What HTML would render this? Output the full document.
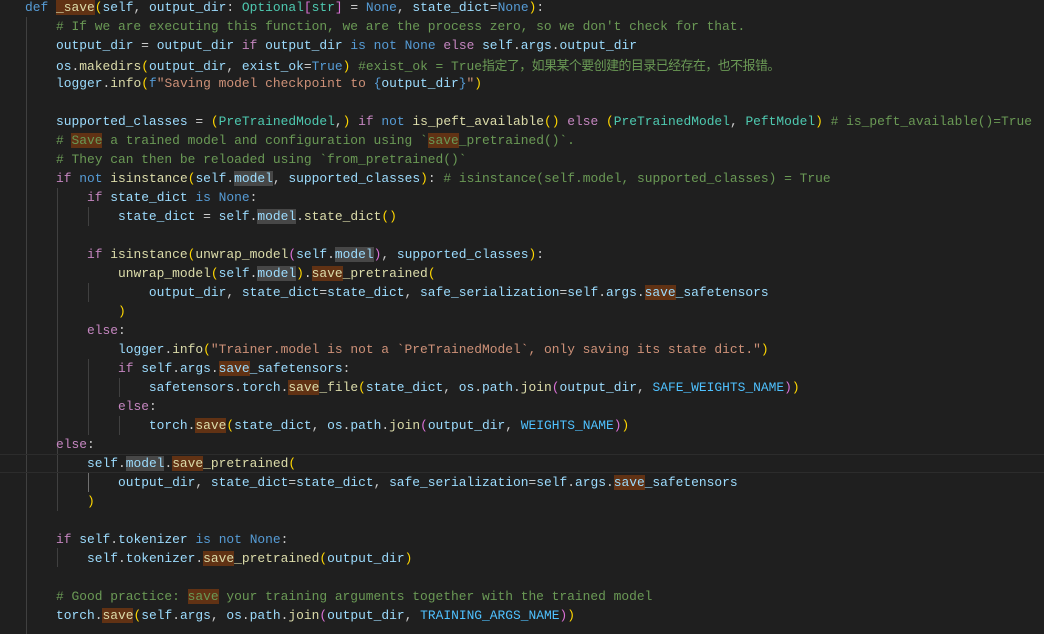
<!DOCTYPE html>
<html><head><meta charset="utf-8"><style>
html,body{margin:0;padding:0;background:#1f1f1f;width:1044px;height:634px;overflow:hidden}
#ed{position:absolute;left:0;top:-2px;width:1044px;font-family:"Liberation Mono","Noto Sans CJK SC",monospace;font-size:12.92px;color:#cccccc}
.l{height:19px;line-height:19px;white-space:pre;padding-left:25px;position:relative}
.cur{box-shadow:inset 0 1px 0 #2c2c2c,inset 0 -1px 0 #2c2c2c}
.k{color:#569cd6}.c{color:#c586c0}.f{color:#dcdcaa}.v{color:#9cdcfe}.m{color:#6a9955}.s{color:#ce9178}.t{color:#4ec9b0}.n{color:#4fc1ff}
.b1{color:#ffd700}.b2{color:#da70d6}.b3{color:#179fff}
.hm{background:#474747}.hs{background:#613214}
.g{position:absolute;width:1px;background:#404040}
.cn{font-family:"Noto Sans CJK SC",sans-serif;letter-spacing:-0.5px}
</style></head><body>
<div class="g" style="left:26px;top:17px;height:617px"></div>
<div class="g" style="left:57px;top:188px;height:266px"></div>
<div class="g" style="left:88px;top:283px;height:19px"></div>
<div class="g" style="left:88px;top:359px;height:76px"></div>
<div class="g" style="left:119px;top:378px;height:19px"></div>
<div class="g" style="left:119px;top:416px;height:19px"></div>
<div class="g" style="left:88px;top:207px;height:19px"></div>
<div class="g" style="left:57px;top:454px;height:57px"></div>
<div class="g" style="left:88px;top:473px;height:19px;background:#707070"></div>
<div class="g" style="left:57px;top:548px;height:19px"></div>
<div id="ed">
<div class="l"><span class="k">def</span> <span class="f hs">_save</span><span class="b1">(</span><span class="v">self</span>, <span class="v">output_dir</span>: <span class="t">Optional</span><span class="b2">[</span><span class="t">str</span><span class="b2">]</span> = <span class="k">None</span>, <span class="v">state_dict</span>=<span class="k">None</span><span class="b1">)</span>:</div>
<div class="l">    <span class="m"># If we are executing this function, we are the process zero, so we don't check for that.</span></div>
<div class="l">    <span class="v">output_dir</span> = <span class="v">output_dir</span> <span class="c">if</span> <span class="v">output_dir</span> <span class="k">is</span> <span class="k">not</span> <span class="k">None</span> <span class="c">else</span> <span class="v">self</span>.<span class="v">args</span>.<span class="v">output_dir</span></div>
<div class="l">    <span class="v">os</span>.<span class="f">makedirs</span><span class="b1">(</span><span class="v">output_dir</span>, <span class="v">exist_ok</span>=<span class="k">True</span><span class="b1">)</span> <span class="m">#exist_ok = True<span class="cn">指定了，如果某个要创建的目录已经存在，也不报错。</span></span></div>
<div class="l">    <span class="v">logger</span>.<span class="f">info</span><span class="b1">(</span><span class="k">f</span><span class="s">"Saving model checkpoint to </span><span class="k">{</span><span class="v">output_dir</span><span class="k">}</span><span class="s">"</span><span class="b1">)</span></div>
<div class="l"> </div>
<div class="l">    <span class="v">supported_classes</span> = <span class="b1">(</span><span class="t">PreTrainedModel</span>,<span class="b1">)</span> <span class="c">if</span> <span class="k">not</span> <span class="f">is_peft_available</span><span class="b1">()</span> <span class="c">else</span> <span class="b1">(</span><span class="t">PreTrainedModel</span>, <span class="t">PeftModel</span><span class="b1">)</span> <span class="m"># is_peft_available()=True</span></div>
<div class="l">    <span class="m"># <span class="hs">Save</span> a trained model and configuration using `<span class="hs">save</span>_pretrained()`.</span></div>
<div class="l">    <span class="m"># They can then be reloaded using `from_pretrained()`</span></div>
<div class="l">    <span class="c">if</span> <span class="k">not</span> <span class="f">isinstance</span><span class="b1">(</span><span class="v">self</span>.<span class="v hm">model</span>, <span class="v">supported_classes</span><span class="b1">)</span>: <span class="m"># isinstance(self.model, supported_classes) = True</span></div>
<div class="l">        <span class="c">if</span> <span class="v">state_dict</span> <span class="k">is</span> <span class="k">None</span>:</div>
<div class="l">            <span class="v">state_dict</span> = <span class="v">self</span>.<span class="v hm">model</span>.<span class="f">state_dict</span><span class="b1">()</span></div>
<div class="l"> </div>
<div class="l">        <span class="c">if</span> <span class="f">isinstance</span><span class="b1">(</span><span class="f">unwrap_model</span><span class="b2">(</span><span class="v">self</span>.<span class="v hm">model</span><span class="b2">)</span>, <span class="v">supported_classes</span><span class="b1">)</span>:</div>
<div class="l">            <span class="f">unwrap_model</span><span class="b1">(</span><span class="v">self</span>.<span class="v hm">model</span><span class="b1">)</span>.<span class="f"><span class="hs">save</span>_pretrained</span><span class="b1">(</span></div>
<div class="l">                <span class="v">output_dir</span>, <span class="v">state_dict</span>=<span class="v">state_dict</span>, <span class="v">safe_serialization</span>=<span class="v">self</span>.<span class="v">args</span>.<span class="v"><span class="hs">save</span>_safetensors</span></div>
<div class="l">            <span class="b1">)</span></div>
<div class="l">        <span class="c">else</span>:</div>
<div class="l">            <span class="v">logger</span>.<span class="f">info</span><span class="b1">(</span><span class="s">"Trainer.model is not a `PreTrainedModel`, only saving its state dict."</span><span class="b1">)</span></div>
<div class="l">            <span class="c">if</span> <span class="v">self</span>.<span class="v">args</span>.<span class="v"><span class="hs">save</span>_safetensors</span>:</div>
<div class="l">                <span class="v">safetensors</span>.<span class="v">torch</span>.<span class="f"><span class="hs">save</span>_file</span><span class="b1">(</span><span class="v">state_dict</span>, <span class="v">os</span>.<span class="v">path</span>.<span class="f">join</span><span class="b2">(</span><span class="v">output_dir</span>, <span class="n">SAFE_WEIGHTS_NAME</span><span class="b2">)</span><span class="b1">)</span></div>
<div class="l">            <span class="c">else</span>:</div>
<div class="l">                <span class="v">torch</span>.<span class="f hs">save</span><span class="b1">(</span><span class="v">state_dict</span>, <span class="v">os</span>.<span class="v">path</span>.<span class="f">join</span><span class="b2">(</span><span class="v">output_dir</span>, <span class="n">WEIGHTS_NAME</span><span class="b2">)</span><span class="b1">)</span></div>
<div class="l">    <span class="c">else</span>:</div>
<div class="l cur">        <span class="v">self</span>.<span class="v hm">model</span>.<span class="f"><span class="hs">save</span>_pretrained</span><span class="b1">(</span></div>
<div class="l">            <span class="v">output_dir</span>, <span class="v">state_dict</span>=<span class="v">state_dict</span>, <span class="v">safe_serialization</span>=<span class="v">self</span>.<span class="v">args</span>.<span class="v"><span class="hs">save</span>_safetensors</span></div>
<div class="l">        <span class="b1">)</span></div>
<div class="l"> </div>
<div class="l">    <span class="c">if</span> <span class="v">self</span>.<span class="v">tokenizer</span> <span class="k">is</span> <span class="k">not</span> <span class="k">None</span>:</div>
<div class="l">        <span class="v">self</span>.<span class="v">tokenizer</span>.<span class="f"><span class="hs">save</span>_pretrained</span><span class="b1">(</span><span class="v">output_dir</span><span class="b1">)</span></div>
<div class="l"> </div>
<div class="l">    <span class="m"># Good practice: <span class="hs">save</span> your training arguments together with the trained model</span></div>
<div class="l">    <span class="v">torch</span>.<span class="f hs">save</span><span class="b1">(</span><span class="v">self</span>.<span class="v">args</span>, <span class="v">os</span>.<span class="v">path</span>.<span class="f">join</span><span class="b2">(</span><span class="v">output_dir</span>, <span class="n">TRAINING_ARGS_NAME</span><span class="b2">)</span><span class="b1">)</span></div>
</div>
</body></html>
